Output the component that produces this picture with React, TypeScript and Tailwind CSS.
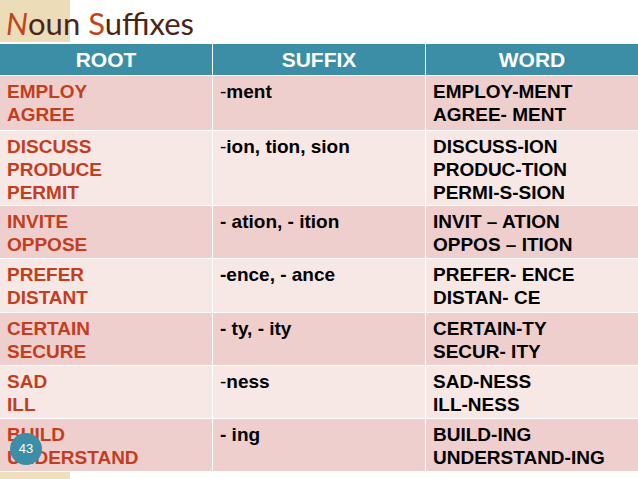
const rows = [
  { root: ["EMPLOY", "AGREE"], thin: true, suffix: "ment", word: ["EMPLOY-MENT", "AGREE- MENT"] },
  { root: ["DISCUSS", "PRODUCE", "PERMIT"], thin: true, suffix: "ion, tion, sion", word: ["DISCUSS-ION", "PRODUC-TION", "PERMI-S-SION"] },
  { root: ["INVITE", "OPPOSE"], thin: false, suffix: "- ation, - ition", word: ["INVIT – ATION", "OPPOS – ITION"] },
  { root: ["PREFER", "DISTANT"], thin: false, suffix: "-ence, - ance", word: ["PREFER- ENCE", "DISTAN- CE"] },
  { root: ["CERTAIN", "SECURE"], thin: false, suffix: "- ty, - ity", word: ["CERTAIN-TY", "SECUR- ITY"] },
  { root: ["SAD", "ILL"], thin: true, suffix: "ness", word: ["SAD-NESS", "ILL-NESS"] },
  { root: ["BUILD", "UNDERSTAND"], thin: false, suffix: "- ing", word: ["BUILD-ING", "UNDERSTAND-ING"] },
]

export default function App() {
  return (
    <div className="relative w-[638px] h-[479px] bg-white overflow-hidden" style={{ fontFamily: '"Liberation Sans", Arial, sans-serif' }}>
      {/* beige tab behind title */}
      <div className="absolute left-0 top-0 w-[70px] h-[42px] bg-[#eddcb8]" />
      <div className="absolute left-0 top-[472px] w-[70px] h-[7px] bg-[#eee0bf]" />

      <div className="relative h-[44px] pl-[6px] pt-[3px]">
        <h1 className="text-[31px] leading-[40px] text-[#4b2418]" style={{ fontFamily: 'Lato, "Open Sans", sans-serif' }}>
          <span className="italic text-[#c0451c]">N</span>oun <span className="text-[#c0451c]">S</span>uffixes
        </h1>
      </div>

      <div className="grid grid-cols-[212px_212px_212px] grid-rows-[31px_54px_74px_52px_53px_52px_52px_52px] gap-[1px] font-bold text-[19px] leading-[23px]">
        {["ROOT", "SUFFIX", "WORD"].map((h) => (
          <div key={h} className="bg-[#3b8ea6] text-white text-[21px] flex items-center justify-center">{h}</div>
        ))}
        {rows.map((r, i) => {
          const bg = i % 2 === 0 ? "bg-[#efcfcd]" : "bg-[#f7e7e5]"
          return [
            <div key={`r${i}`} className={`${bg} pl-[7px] pt-[4px] text-[#c43d1d]`}>
              {r.root.map((t) => <div key={t}>{t}</div>)}
            </div>,
            <div key={`s${i}`} className={`${bg} pl-[7px] pt-[4px] text-black`}>
              {r.thin && <span className="font-normal">-</span>}{r.suffix}
            </div>,
            <div key={`w${i}`} className={`${bg} pl-[7px] pt-[4px] text-black`}>
              {r.word.map((t) => <div key={t}>{t}</div>)}
            </div>,
          ]
        })}
      </div>

      <div className="absolute left-[10px] top-[433px] w-[32px] h-[32px] rounded-full bg-[#3b8ea6] text-white text-[13px] flex items-center justify-center">43</div>
    </div>
  )
}
